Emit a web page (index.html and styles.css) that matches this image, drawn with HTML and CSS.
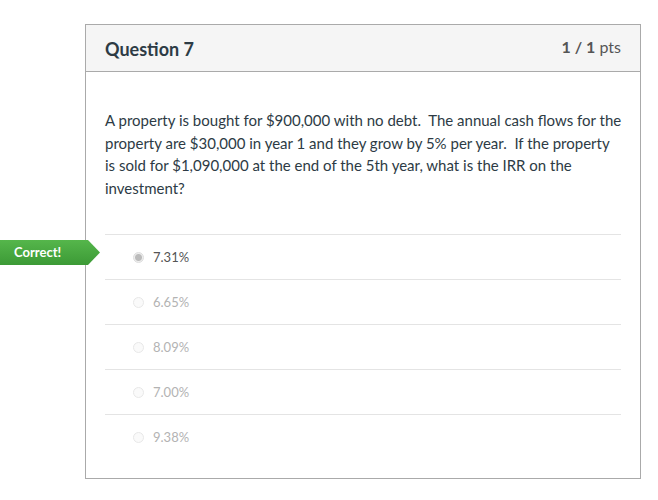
FILE: index.html
```html
<!DOCTYPE html>
<html lang="en">
  <head>
    <meta charset="UTF-8" />
    <meta name="viewport" content="width=device-width, initial-scale=1.0" />
    <title>Question 7</title>
    <link rel="stylesheet" href="styles.css">
  </head>
  <body>
    <div class="question">
      <div class="header">
        <h2 class="title">Question 7</h2>
        <div class="points"><b>1 / 1</b> pts</div>
      </div>
      <div class="content">
        <p class="text">
          A property is bought for $900,000 with no debt.&nbsp; The annual cash flows for the property are $30,000 in year 1 and they grow by 5% per year.&nbsp; If the property is sold for $1,090,000 at the end of the 5th year, what is the IRR on the investment?
        </p>
        <ul class="answers">
          <li class="answer selected">
            <span class="badge">Correct!</span>
            <span class="radio"></span>
            <span class="label">7.31%</span>
          </li>
          <li class="answer">
            <span class="radio"></span>
            <span class="label">6.65%</span>
          </li>
          <li class="answer">
            <span class="radio"></span>
            <span class="label">8.09%</span>
          </li>
          <li class="answer">
            <span class="radio"></span>
            <span class="label">7.00%</span>
          </li>
          <li class="answer">
            <span class="radio"></span>
            <span class="label">9.38%</span>
          </li>
        </ul>
      </div>
    </div>
  </body>
</html>
```

FILE: styles.css
```css
* {
  margin: 0;
  padding: 0;
  box-sizing: border-box;
}
body {
  font-family: Lato, "Open Sans", "Liberation Sans", sans-serif;
  color: #2d3b45;
  background: #fff;
}
ul,
li {
  list-style: none;
}

/* question card */
.question {
  width: 556px;
  margin: 24px 0 0 85px;
  border: 1px solid #aaa;
}
.header {
  display: flex;
  justify-content: space-between;
  align-items: center;
  height: 47px;
  padding: 0 19px;
  background-color: #f5f5f5;
  border-bottom: 1px solid #aaa;
}
.title {
  font-size: 18px;
  font-weight: 700;
  color: #2d3b45;
  padding-top: 2px;
}
.points {
  font-size: 16px;
  color: #555;
  margin-top: -4px;
}
.points b {
  font-weight: 700;
}

.content {
  padding: 37px 19px 19px;
}
.text {
  font-size: 15px;
  line-height: 22.5px;
  color: #2d3b45;
  margin-right: -2px;
}

/* answer list */
.answers {
  margin-top: 35px;
}
.answer {
  position: relative;
  display: flex;
  align-items: center;
  height: 45px;
  padding-left: 28px;
  border-top: 1px solid #e4e4e4;
  font-size: 13px;
  color: #b3b3b3;
}
.answer.selected {
  color: #555;
}
.radio {
  width: 11px;
  height: 11px;
  margin-right: 9px;
  border-radius: 50%;
  border: 1px solid #e8e8e8;
  background: #fafafa;
}
.answer.selected .radio {
  border-color: #ddd;
  background: radial-gradient(circle, #bbb 0, #bbb 3px, #eee 4px);
}

/* result flag hanging off the left edge */
.badge {
  position: absolute;
  left: -105px;
  top: 5px;
  width: 100px;
  height: 25px;
  padding-left: 14px;
  line-height: 24px;
  font-size: 13px;
  font-weight: 700;
  color: #fff;
  background: linear-gradient(#55b64b, #3c9a36);
  clip-path: polygon(0 0, 88px 0, 100px 50%, 88px 100%, 0 100%);
}
```
